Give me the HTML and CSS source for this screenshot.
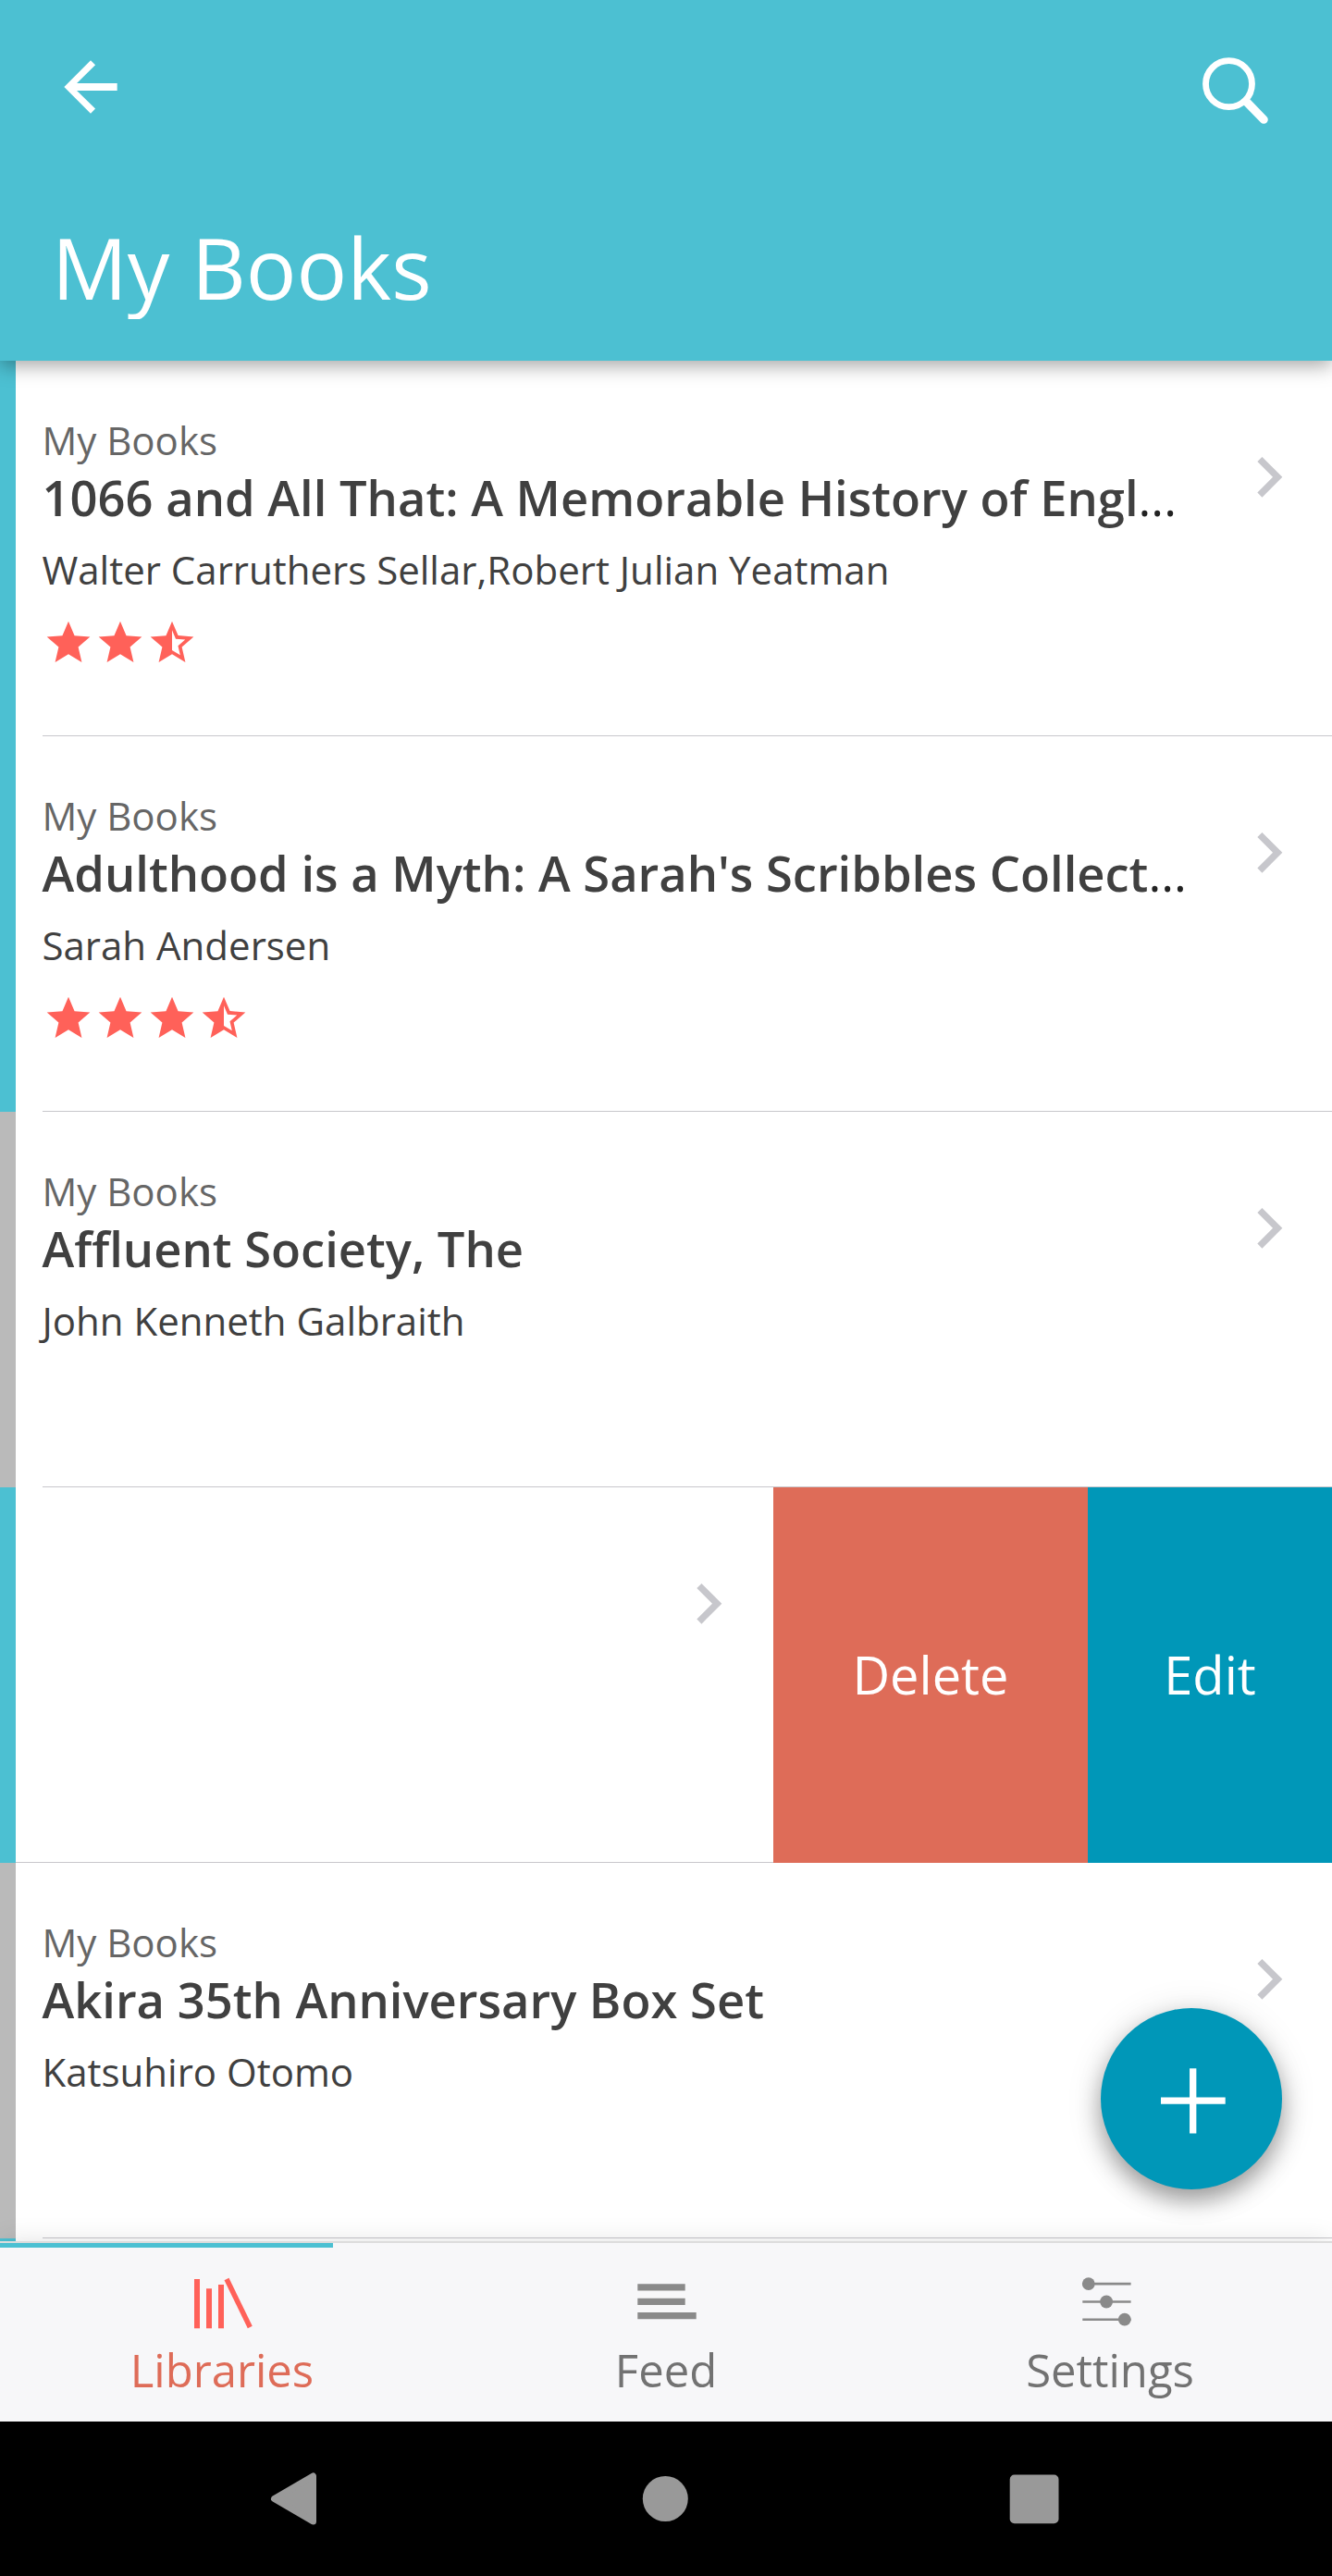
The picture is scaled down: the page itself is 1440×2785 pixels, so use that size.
FILE: index.html
```html
<!DOCTYPE html>
<html lang="en">
<head>
<meta charset="utf-8">
<title>My Books</title>
<link rel="stylesheet" href="styles.css">
</head>
<body>
<svg class="defs" width="0" height="0" aria-hidden="true">
  <symbol id="star" viewBox="0 0 24 24"><path d="M12 17.27 18.18 21l-1.64-7.03L22 9.24l-7.19-.61L12 2 9.19 8.63 2 9.24l5.46 4.73L5.82 21z"/></symbol>
  <symbol id="star-half" viewBox="0 0 24 24"><path d="M22 9.24l-7.19-.62L12 2 9.19 8.63 2 9.24l5.46 4.73L5.82 21 12 17.27 18.18 21l-1.63-7.03L22 9.24zM12 15.4V6.1l1.71 4.04 4.38.38-3.32 2.88 1 4.28L12 15.4z"/></symbol>
  <symbol id="chevron" viewBox="0 0 24 24"><path d="M10 6 8.59 7.41 13.17 12l-4.58 4.59L10 18l6-6z"/></symbol>
</svg>
<div class="app">
  <header class="header">
    <div class="toolbar">
      <svg class="back" viewBox="0 0 24 24"><path d="M20 10.9H7.83l5.59-5.5L12 4l-8 8 8 8 1.41-1.41L7.83 13.1H20z"/></svg>
      <svg class="search" viewBox="0 0 84 84"><circle cx="36.5" cy="36.7" r="25"/><path d="M56 56.5 74.3 75.3"/></svg>
    </div>
    <h1 class="heading">My Books</h1>
  </header>

  <main class="list">
    <article class="row">
      <div class="body">
        <div class="info">
          <div class="library">My Books</div>
          <div class="title">1066 and All That: A Memorable History of Engl<span class="more">...</span></div>
          <div class="author">Walter Carruthers Sellar,Robert Julian Yeatman</div>
          <div class="stars"><svg><use href="#star"/></svg><svg><use href="#star"/></svg><svg><use href="#star-half"/></svg></div>
        </div>
        <svg class="chevron"><use href="#chevron"/></svg>
      </div>
    </article>
    <article class="row">
      <div class="body">
        <div class="info">
          <div class="library">My Books</div>
          <div class="title">Adulthood is a Myth: A Sarah's Scribbles Collect<span class="more">...</span></div>
          <div class="author">Sarah Andersen</div>
          <div class="stars"><svg><use href="#star"/></svg><svg><use href="#star"/></svg><svg><use href="#star"/></svg><svg><use href="#star-half"/></svg></div>
        </div>
        <svg class="chevron"><use href="#chevron"/></svg>
      </div>
    </article>
    <article class="row unread">
      <div class="body">
        <div class="info">
          <div class="library">My Books</div>
          <div class="title">Affluent Society, The</div>
          <div class="author">John Kenneth Galbraith</div>
        </div>
        <svg class="chevron"><use href="#chevron"/></svg>
      </div>
    </article>
    <article class="row swiped">
      <div class="body">
        <div class="info"></div>
        <svg class="chevron"><use href="#chevron"/></svg>
      </div>
      <div class="action delete">Delete</div>
      <div class="action edit">Edit</div>
    </article>
    <article class="row unread">
      <div class="body">
        <div class="info">
          <div class="library">My Books</div>
          <div class="title">Akira 35th Anniversary Box Set</div>
          <div class="author">Katsuhiro Otomo</div>
        </div>
        <svg class="chevron"><use href="#chevron"/></svg>
      </div>
    </article>
    <article class="row"><div class="body"></div></article>
  </main>

  <nav class="tabs">
    <div class="tab active">
      <svg viewBox="0 0 72 72"><path d="M6 10h6v53.3H6zM19 20.3h6v43h-6zM32 16h6v47.3h-6z"/><path class="slant" d="M41 10 66.3 62"/></svg>
      <span>Libraries</span>
    </div>
    <div class="tab">
      <svg viewBox="0 0 72 72"><path d="M5.3 15.2h51.4v7.2H5.3zM5.3 30.7h51.4v7.2H5.3zM5.3 46h63.4v7.2H5.3z"/></svg>
      <span>Feed</span>
    </div>
    <div class="tab">
      <svg viewBox="0 0 72 72"><path d="M6.3 13.8h52.3v2.6H6.3zM6.3 33.2h52.3v2.6H6.3zM6.3 52.4h52.3V55H6.3z"/><circle cx="12.8" cy="15.1" r="6.9"/><circle cx="32.1" cy="34.5" r="6.9"/><circle cx="51.8" cy="53.7" r="6.9"/></svg>
      <span>Settings</span>
    </div>
  </nav>

  <footer class="system">
    <svg viewBox="0 0 80 80"><path class="round" d="M16.5 38.5 58.5 14V63z"/></svg>
    <svg viewBox="0 0 80 80"><circle cx="39.3" cy="38.5" r="24.5"/></svg>
    <svg viewBox="0 0 80 80"><rect x="11.7" y="12.5" width="52.8" height="52.8" rx="5"/></svg>
  </footer>

  <button class="fab" aria-label="Add book"><svg viewBox="0 0 196 196"><path d="M65 100.2h69.7M99.7 65.2v70.4"/></svg></button>
</div>
</body>
</html>
```
FILE: styles.css
```css
* { box-sizing: border-box; }

body {
  margin: 0;
  background: #fff;
  font-family: "Open Sans", "Noto Sans", sans-serif;
}

svg { display: block; flex: none; }
.defs { position: absolute; }

.app {
  position: relative;
  display: flex;
  flex-direction: column;
  width: 1440px;
  height: 2785px;
  overflow: hidden;
}

.header {
  position: relative;
  z-index: 2;
  height: 390px;
  background: #4cc0d2;
  box-shadow: 0 5px 20px rgba(0, 0, 0, .36);
  color: #fff;
}

.toolbar {
  display: flex;
  justify-content: space-between;
  height: 227px;
  padding: 51px 64px 0 55px;
}
.back { width: 86px; height: 86px; fill: #fff; }
.search {
  width: 84px;
  height: 84px;
  margin: 3px 0 0;
  fill: none;
  stroke: #fff;
  stroke-width: 6.8;
}
.search path { stroke-width: 9; stroke-linecap: round; }

.heading {
  height: 118px;
  margin: 0;
  padding-left: 56px;
  overflow: hidden;
  font-size: 91px;
  font-weight: 400;
  line-height: 124px;
}

.list { height: 2033px; overflow: hidden; }

.row {
  display: flex;
  height: 406px;
  border-left: 17px solid #4cc0d2;
}
.unread { border-left-color: #bababa; }

.body {
  flex: 1;
  display: flex;
  min-width: 0;
  margin-left: 28.5px;
  border-bottom: 1px solid #c8c7cc;
}
.swiped .body { margin-left: 0; }

.info { flex: 1; min-width: 0; padding-top: 57px; white-space: nowrap; color: #404040; }
.library { font-size: 42px; line-height: 57px; color: #666; }
.title { font-size: 52.5px; font-weight: 600; line-height: 67px; }
.more { font-weight: 400; color: #222; }
.author { margin-top: 16px; font-size: 42px; line-height: 57px; }
.stars { display: flex; margin-top: 22.5px; fill: #ff6159; }
.stars svg { width: 56px; height: 56px; }

.chevron { width: 87.5px; height: 87.5px; margin: 82px 25px 0 0; fill: #c7c7cc; }
.swiped .chevron { margin-right: 26.5px; }

.action {
  display: flex;
  align-items: center;
  justify-content: center;
  padding-bottom: 2px;
  color: #fff;
  font-size: 56px;
}
.delete { width: 340px; background: #de6c58; }
.edit { width: 264px; background: #0097b8; }

.tabs {
  position: relative;
  z-index: 1;
  display: flex;
  height: 195px;
  border-top: 2px solid #dcdcdc;
  background: #f7f7f9;
  box-shadow: 0 0 28px -2px rgba(0, 0, 0, .13);
}
.tab {
  flex: 1;
  display: flex;
  flex-direction: column;
  align-items: center;
  gap: 3px;
  padding-top: 29px;
  fill: #8a8a8a;
  color: #727272;
  font-size: 49px;
  line-height: 66px;
}
.tab svg { width: 72px; height: 72px; }
.active {
  fill: #ff6159;
  color: #de6c58;
  background: linear-gradient(#4cc0d2, #4cc0d2) 0 0 / 360px 5px no-repeat;
}
.slant { stroke: #ff6159; stroke-width: 5.5; }

.system {
  position: relative;
  z-index: 1;
  display: flex;
  justify-content: center;
  gap: 320px;
  height: 167px;
  padding-top: 45px;
  background: #000;
  fill: #999;
}
.system svg { width: 80px; height: 80px; }
.round { stroke: #999; stroke-width: 7; stroke-linejoin: round; }

.fab {
  position: absolute;
  z-index: 2;
  left: 1190px;
  top: 2171px;
  width: 196px;
  height: 196px;
  padding: 0;
  border: 0;
  border-radius: 50%;
  background: #0097b8;
  box-shadow: 0 12px 24px rgba(0, 0, 0, .34), 0 4px 40px rgba(0, 0, 0, .12);
}
.fab path { stroke: #fff; stroke-width: 7.3; }
```
